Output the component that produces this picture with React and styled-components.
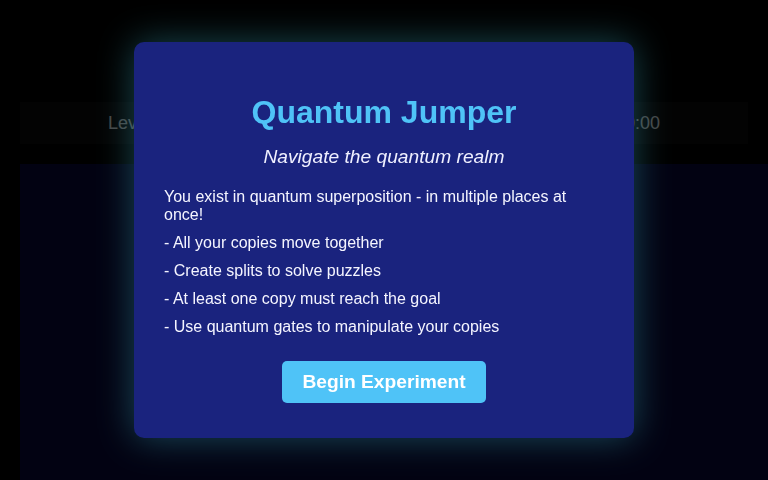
import React from "react";
import styled, { createGlobalStyle } from "styled-components";

const GlobalStyle = createGlobalStyle`
  html, body {
    margin: 0;
    padding: 0;
    background: #000;
    width: 768px;
    height: 480px;
    overflow: hidden;
    font-family: "Liberation Sans", Arial, sans-serif;
  }
`;

const Page = styled.div`
  width: 768px;
  height: 480px;
  padding: 102px 20px 0;
  box-sizing: border-box;
  display: flex;
  flex-direction: column;
  gap: 20px;
  overflow: hidden;
`;

const StatusBar = styled.div`
  display: flex;
  justify-content: space-between;
  padding: 10px 88px;
  background: #0c0c0c;
  color: #e8e8e8;
  font-size: 18px;
  line-height: 22px;
`;

const GameArea = styled.div`
  width: 800px;
  height: 420px;
  flex-shrink: 0;
  background: #08083c;
`;

const Overlay = styled.div`
  position: fixed;
  inset: 0;
  background: rgba(0, 0, 0, 0.7);
  display: flex;
  align-items: center;
  justify-content: center;
`;

const Modal = styled.div`
  width: 500px;
  height: 396px;
  box-sizing: border-box;
  padding: 30px;
  background: #1a237e;
  border-radius: 10px;
  box-shadow: 0 0 36px rgba(64, 190, 210, 0.38);
  color: #ffffff;
  display: flex;
  flex-direction: column;
`;

const Title = styled.h1`
  margin: 22px 0 15px;
  text-align: center;
  color: #4fc3f7;
  font-size: 32px;
  line-height: 37px;
  font-weight: bold;
`;

const Subtitle = styled.p`
  margin: 0 0 20px;
  text-align: center;
  font-style: italic;
  font-size: 19.2px;
  line-height: 22px;
  color: #f0f0ff;
`;

const Para = styled.p`
  margin: 0 0 10px;
  font-size: 16px;
  line-height: 18px;
  color: #f5f5ff;
`;

const Actions = styled.div`
  display: flex;
  justify-content: center;
  margin-top: 15px;
`;

const Button = styled.button`
  border: none;
  background: #4fc3f7;
  color: #ffffff;
  font-family: "Liberation Sans", Arial, sans-serif;
  font-weight: bold;
  font-size: 19.2px;
  line-height: 22px;
  padding: 10px 20px;
  border-radius: 5px;
  cursor: pointer;
`;

export default function App() {
  const lines = [
    "You exist in quantum superposition - in multiple places at once!",
    "- All your copies move together",
    "- Create splits to solve puzzles",
    "- At least one copy must reach the goal",
    "- Use quantum gates to manipulate your copies",
  ];
  return (
    <>
      <GlobalStyle />
      <Page>
        <StatusBar>
          <span>Level: 1</span>
          <span>Copies: 1</span>
          <span>Time: 0:00</span>
        </StatusBar>
        <GameArea />
      </Page>
      <Overlay>
        <Modal>
          <Title>Quantum Jumper</Title>
          <Subtitle>Navigate the quantum realm</Subtitle>
          {lines.map((l) => (
            <Para key={l}>{l}</Para>
          ))}
          <Actions>
            <Button>Begin Experiment</Button>
          </Actions>
        </Modal>
      </Overlay>
    </>
  );
}
